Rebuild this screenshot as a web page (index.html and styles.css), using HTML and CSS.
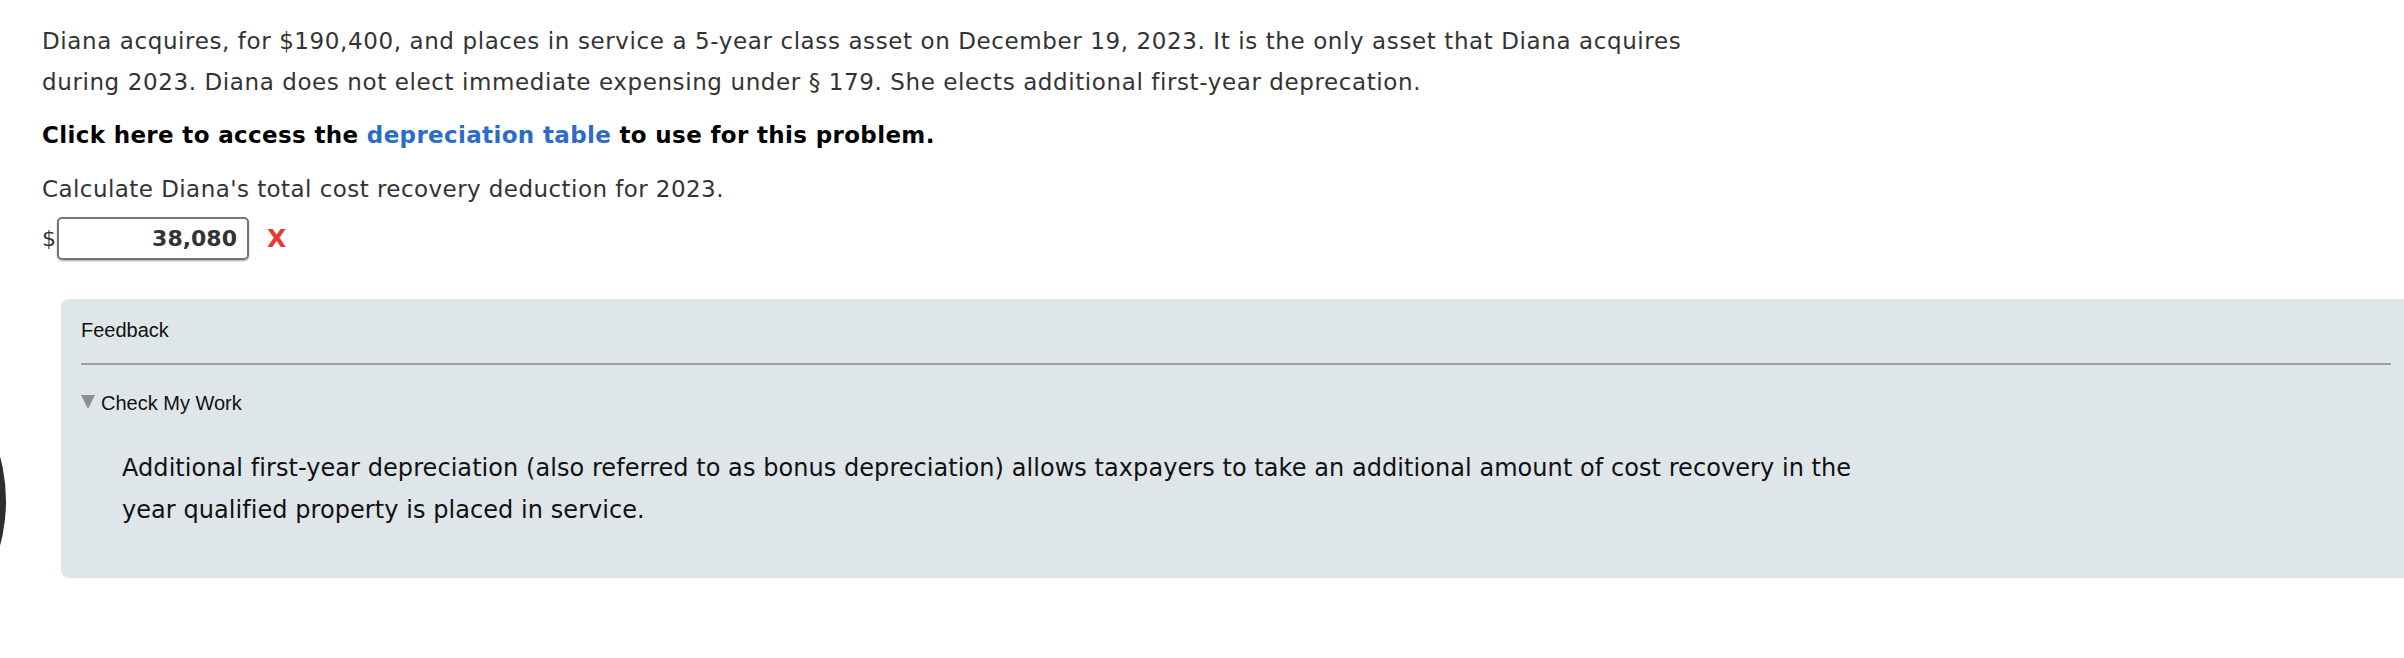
FILE: index.html
```html
<!DOCTYPE html>
<html lang="en">
<head>
<meta charset="utf-8">
<title>Cost recovery question</title>
<link rel="stylesheet" href="styles.css">
</head>
<body>
<div class="edge-dot"></div>
<main class="question">
  <p class="desc">Diana acquires, for $190,400, and places in service a 5-year class asset on December 19, 2023. It is the only asset that Diana acquires<br>during 2023. Diana does not elect immediate expensing under § 179. She elects additional first-year deprecation.</p>
  <p class="access">Click here to access the <a class="link" href="#">depreciation table</a> to use for this problem.</p>
  <p class="prompt">Calculate Diana's total cost recovery deduction for 2023.</p>
  <div class="answer-row">
    <span class="dollar">$</span>
    <span class="answer-box">38,080</span>
    <span class="wrong">X</span>
  </div>
</main>
<section class="feedback">
  <div class="fb-title">Feedback</div>
  <div class="fb-rule"></div>
  <div class="cmw">
    <span class="tri"></span>
    <span class="cmw-label">Check My Work</span>
  </div>
  <p class="fb-text">Additional first-year depreciation (also referred to as bonus depreciation) allows taxpayers to take an additional amount of cost recovery in the<br>year qualified property is placed in service.</p>
</section>
</body>
</html>
```

FILE: styles.css
```css
html, body {
  margin: 0;
  padding: 0;
  background: #ffffff;
  overflow: hidden;
}
body {
  position: relative;
  width: 2404px;
  height: 658px;
  font-family: "DejaVu Sans", Verdana, sans-serif;
}
.edge-dot {
  position: absolute;
  left: -334px;
  top: 331px;
  width: 340px;
  height: 340px;
  border-radius: 50%;
  background: #2e2e2e;
}
.question {
  padding: 21px 0 0 42px;
  color: #333333;
  font-size: 23px;
  letter-spacing: 0.6px;
  line-height: 41px;
}
.question p {
  margin: 0;
}
.desc {
  white-space: nowrap;
}
.access {
  margin-top: 12px !important;
  font-weight: bold;
  color: #000000;
  letter-spacing: 0.35px;
}
.link {
  color: #2b6cc6;
  text-decoration: none;
}
.prompt {
  margin-top: 13px !important;
  letter-spacing: 0.44px;
}
.answer-row {
  display: flex;
  align-items: center;
  margin-top: 7px;
  height: 43px;
  letter-spacing: 0;
}
.dollar {
  font-size: 22px;
  width: 15px;
}
.answer-box {
  box-sizing: border-box;
  width: 192px;
  height: 43px;
  border: 2px solid #767676;
  border-radius: 5px;
  box-shadow: 0 1px 2px rgba(0, 0, 0, 0.35);
  font-weight: bold;
  font-size: 22px;
  line-height: 39px;
  text-align: right;
  padding-right: 10px;
  color: #333333;
}
.wrong {
  margin-left: 18px;
  color: #e8392e;
  font-weight: bold;
  font-size: 25px;
  line-height: 1;
}
.feedback {
  box-sizing: border-box;
  margin: 39px 0 0 61px;
  width: 2350px;
  height: 279px;
  background: #dfe6e9;
  border-radius: 8px;
  padding: 20px 20px 0 20px;
}
.fb-title {
  font-family: "Liberation Sans", Arial, sans-serif;
  font-size: 20px;
  line-height: 23px;
  color: #111111;
}
.fb-rule {
  margin-top: 21px;
  height: 2px;
  background: #9a9ea2;
}
.cmw {
  display: flex;
  align-items: center;
  margin-top: 27px;
  font-family: "Liberation Sans", Arial, sans-serif;
  font-size: 20px;
  line-height: 22px;
  color: #111111;
}
.tri {
  width: 0;
  height: 0;
  border-left: 7px solid transparent;
  border-right: 7px solid transparent;
  border-top: 14px solid #8f8f8f;
  margin-right: 6px;
  margin-top: -2px;
}
.fb-text {
  margin: 33px 0 0 41px;
  font-size: 24px;
  letter-spacing: 0.06px;
  line-height: 42px;
  color: #111111;
  white-space: nowrap;
}
```
